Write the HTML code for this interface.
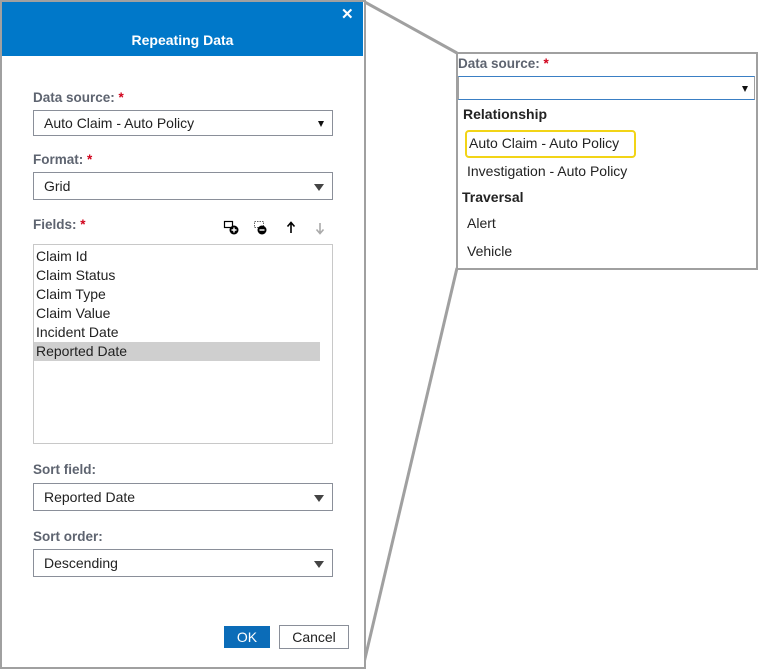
<!DOCTYPE html>
<html><head><meta charset="utf-8"><style>
*{box-sizing:border-box;margin:0;padding:0}
body{width:759px;height:669px;background:#fff;position:relative;overflow:hidden;font-family:"Liberation Sans",sans-serif;font-size:14px;color:#222}
.a{position:absolute}
.lbl{position:absolute;left:33px;color:#5e6470;font-weight:bold;font-size:13.5px}
.req{color:#d0021b}
.sel{position:absolute;left:33px;width:300px;border:1px solid #8a8f99;background:#fff;padding-left:10px;font-size:14px;color:#222}
.tri{position:absolute;right:8px;width:0;height:0;border-left:5px solid transparent;border-right:5px solid transparent;border-top:7px solid #444}
.tri.s{border-left-width:3.5px;border-right-width:3.5px;border-top-width:6px;border-top-color:#111}
</style></head><body>
<svg class="a" style="left:0;top:0" width="759" height="669">
<line x1="363" y1="1" x2="457" y2="53" stroke="#a0a0a0" stroke-width="3"/>
<line x1="363" y1="667" x2="457" y2="268" stroke="#a0a0a0" stroke-width="3"/>
</svg>
<div class="a" style="left:0;top:0;width:366px;height:669px;border:2px solid #a0a0a0;background:#fff"></div>
<div class="a" style="left:2px;top:2px;width:361px;height:54px;background:#0078c9;color:#fff;font-weight:bold;font-size:14px;text-align:center;line-height:76px">Repeating Data</div>
<div class="a" style="left:341px;top:5px;color:#fff;font-weight:bold;font-size:15px">✕</div>
<div class="lbl" style="top:90px">Data source: <span class="req">*</span></div>
<div class="sel" style="top:110px;height:26px;line-height:24px">Auto Claim - Auto Policy<span class="tri s" style="top:10px"></span></div>
<div class="lbl" style="top:152px">Format: <span class="req">*</span></div>
<div class="sel" style="top:172px;height:28px;line-height:27px">Grid<span class="tri" style="top:11px"></span></div>
<div class="lbl" style="top:217px">Fields: <span class="req">*</span></div>
<svg class="a" style="left:220px;top:218px" width="110" height="20">
<rect x="4.5" y="3.5" width="8" height="6" fill="none" stroke="#000" stroke-width="1.2"/>
<circle cx="14" cy="12" r="4.5" fill="#000"/><path d="M11.5 12h5M14 9.5v5" stroke="#fff" stroke-width="1.4"/>
<rect x="34.5" y="3.5" width="9" height="6" fill="none" stroke="#666" stroke-width="1" stroke-dasharray="1.5 1"/>
<circle cx="42" cy="12" r="4.5" fill="#000"/><path d="M39.5 12h5" stroke="#fff" stroke-width="1.4"/>
<path d="M71 15V5M67.5 8.5L71 4.5l3.5 4" stroke="#000" stroke-width="1.6" fill="none"/>
<path d="M100 5v10M96.5 11.5L100 15.5l3.5-4" stroke="#aaa" stroke-width="1.6" fill="none"/>
</svg>
<div class="a" style="left:33px;top:244px;width:300px;height:200px;border:1px solid #c8c8c8;padding-top:2px;font-size:14px;line-height:19px;color:#222">
<div style="padding-left:2px">Claim Id</div>
<div style="padding-left:2px">Claim Status</div>
<div style="padding-left:2px">Claim Type</div>
<div style="padding-left:2px">Claim Value</div>
<div style="padding-left:2px">Incident Date</div>
<div style="padding-left:2px;background:#cfcfcf;width:286px">Reported Date</div>
</div>
<div class="lbl" style="top:462px">Sort field:</div>
<div class="sel" style="top:483px;height:28px;line-height:27px">Reported Date<span class="tri" style="top:11px"></span></div>
<div class="lbl" style="top:529px">Sort order:</div>
<div class="sel" style="top:549px;height:28px;line-height:27px">Descending<span class="tri" style="top:11px"></span></div>
<div class="a" style="left:224px;top:626px;width:46px;height:22px;background:#0b6cb8;color:#fff;text-align:center;line-height:22px;font-size:14px">OK</div>
<div class="a" style="left:279px;top:625px;width:70px;height:24px;border:1px solid #8a8f99;text-align:center;line-height:22px;font-size:14px">Cancel</div>
<div class="a" style="left:456px;top:52px;width:302px;height:218px;border:2px solid #a0a0a0;background:#fff"></div>
<div class="a" style="left:458px;top:56px;color:#5e6470;font-weight:bold;font-size:13.5px">Data source: <span class="req">*</span></div>
<div class="a" style="left:458px;top:76px;width:297px;height:24px;border:1px solid #3a7fc4;border-left-color:#a0a0a0;border-right-color:#a0a0a0"><span class="tri s" style="top:9px;right:6px"></span></div>
<div class="a" style="left:463px;top:106px;font-weight:bold;font-size:14px;color:#222">Relationship</div>
<div class="a" style="left:465px;top:130px;width:171px;height:28px;border:2.5px solid #f2d416;border-radius:4px"></div>
<div class="a" style="left:469px;top:135px;font-size:14px">Auto Claim - Auto Policy</div>
<div class="a" style="left:467px;top:163px;font-size:14px">Investigation - Auto Policy</div>
<div class="a" style="left:462px;top:189px;font-weight:bold;font-size:14px">Traversal</div>
<div class="a" style="left:467px;top:215px;font-size:14px">Alert</div>
<div class="a" style="left:467px;top:243px;font-size:14px">Vehicle</div>
</body></html>
